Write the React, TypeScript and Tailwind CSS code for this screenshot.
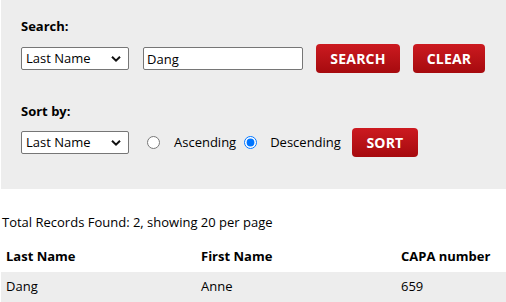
import React from "react";

function Chevron() {
  return (
    <svg width="10" height="7" viewBox="0 0 10 7" className="absolute right-[8px] top-1/2 -translate-y-1/2 pointer-events-none">
      <path d="M1 1.2 L5 5.2 L9 1.2" fill="none" stroke="#111" strokeWidth="2" />
    </svg>
  );
}

function Select() {
  return (
    <div className="relative w-[108px] h-[23px]">
      <select
        defaultValue="Last Name"
        className="appearance-none w-full h-full border border-[#767676] rounded-[2px] bg-white pl-[4px] text-[13px] text-black outline-none"
      >
        <option>Last Name</option>
        <option>First Name</option>
        <option>CAPA number</option>
      </select>
      <Chevron />
    </div>
  );
}

function RedButton({ children, w }: { children: React.ReactNode; w: string }) {
  return (
    <button
      className={`${w} h-[29px] rounded-[4px] bg-gradient-to-b from-[#cc1a20] to-[#a60a0e] text-white font-bold text-[14px] tracking-[0.2px] flex items-center justify-center`}
    >
      {children}
    </button>
  );
}

export default function App() {
  return (
    <div className="w-[506px] h-[302px] bg-white font-['Open_Sans',sans-serif] text-[13px] text-black overflow-hidden">
      <div className="ml-px h-[189px] bg-[#ededed] pl-[20px] pt-[17px]">
        <div className="font-bold leading-[18px]">Search:</div>
        <div className="mt-[9px] flex items-center h-[29px]">
          <Select />
          <input
            defaultValue="Dang"
            className="ml-[14px] w-[160px] h-[23px] border border-[#767676] rounded-[2px] bg-white pl-[3px] text-[13px] outline-none"
          />
          <div className="ml-[13px]">
            <RedButton w="w-[84px]">SEARCH</RedButton>
          </div>
          <div className="ml-[13px]">
            <RedButton w="w-[72px]">CLEAR</RedButton>
          </div>
        </div>
        <div className="mt-[29px] font-bold leading-[18px]">Sort by:</div>
        <div className="mt-[8px] flex items-center h-[29px]">
          <Select />
          <input type="radio" name="ord" className="ml-[18px] m-0 w-[13px] h-[13px]" />
          <span className="ml-[14px]">Ascending</span>
          <input type="radio" name="ord" defaultChecked className="ml-[8px] m-0 w-[13px] h-[13px]" />
          <span className="ml-[13px]">Descending</span>
          <div className="ml-[11px]">
            <RedButton w="w-[66px]">SORT</RedButton>
          </div>
        </div>
      </div>
      <div className="ml-[2px] mt-[24px] leading-[18px]">Total Records Found: 2, showing 20 per page</div>
      <div className="mt-[11px] ml-px">
        <div className="grid grid-cols-[195px_200px_1fr] h-[30px] items-center font-bold">
          <div className="pl-[5px]">Last Name</div>
          <div className="pl-[5px]">First Name</div>
          <div className="pl-[5px]">CAPA number</div>
        </div>
        <div className="grid grid-cols-[195px_200px_1fr] h-[30px] items-center bg-[#ededed]">
          <div className="pl-[5px]">Dang</div>
          <div className="pl-[5px]">Anne</div>
          <div className="pl-[5px]">659</div>
        </div>
      </div>
    </div>
  );
}
